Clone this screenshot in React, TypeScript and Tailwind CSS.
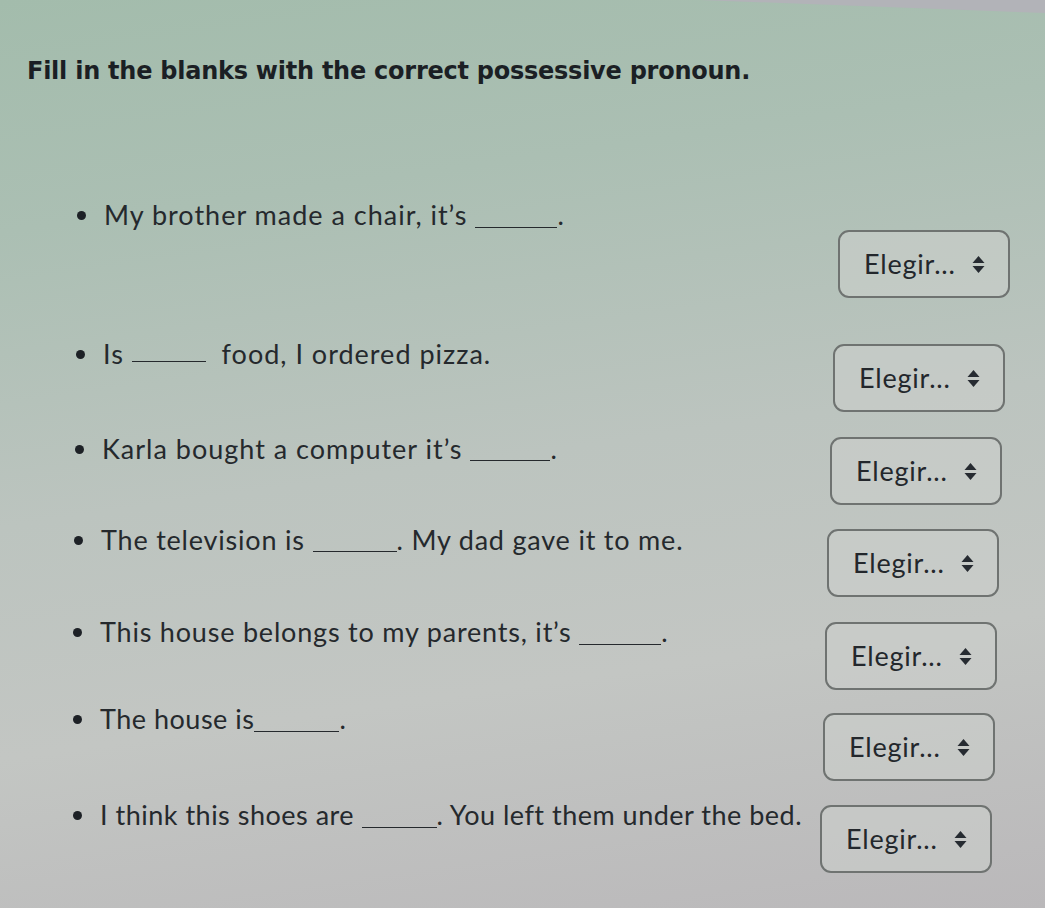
import React from "react";

type Part = string | { blank: string };

type Row = {
  parts: Part[];
  rowClass: string;
  textClass: string;
  selectClass: string;
};

const rows: Row[] = [
  {
    parts: ["My brother made a chair, it’s ", { blank: "w-[82px] translate-y-[9px]" }, "."],
    rowClass: "mt-[110px]",
    textClass: "pl-[77px] tracking-[1px]",
    selectClass: "mt-[33px] mr-[35px]",
  },
  {
    parts: ["Is ", { blank: "w-[74px] translate-y-[4px]" }, "  food, I ordered pizza."],
    rowClass: "mt-[38px]",
    textClass: "pl-[76px] tracking-[1px]",
    selectClass: "mt-[8px] mr-[40px]",
  },
  {
    parts: ["Karla bought a computer it’s ", { blank: "w-[80px] translate-y-[8px]" }, "."],
    rowClass: "mt-[19px]",
    textClass: "pl-[75px] tracking-[1px]",
    selectClass: "mt-[6px] mr-[43px]",
  },
  {
    parts: ["The television is ", { blank: "w-[84px] translate-y-[8px]" }, ". My dad gave it to me."],
    rowClass: "mt-[17px]",
    textClass: "pl-[74px] tracking-[0.8px]",
    selectClass: "mt-[7px] mr-[46px]",
  },
  {
    parts: ["This house belongs to my parents, it’s ", { blank: "w-[82px] translate-y-[9px]" }, "."],
    rowClass: "mt-[17px]",
    textClass: "pl-[73px] tracking-[0.8px]",
    selectClass: "mt-[8px] mr-[48px]",
  },
  {
    parts: ["The house is", { blank: "w-[85px] translate-y-[9px]" }, "."],
    rowClass: "mt-[11px]",
    textClass: "pl-[73px] tracking-[0.5px]",
    selectClass: "mt-[12px] mr-[50px]",
  },
  {
    parts: ["I think this shoes are ", { blank: "w-[75px] translate-y-[9px]" }, ". You left them under the bed."],
    rowClass: "mt-[16px]",
    textClass: "pl-[73px] tracking-[0.5px]",
    selectClass: "mt-[8px] mr-[53px]",
  },
];

function UpDownArrows() {
  return (
    <svg width="13" height="19" viewBox="0 0 13 19" className="shrink-0">
      <path d="M6.5 1 L12.5 8 L0.5 8 Z" fill="#262b31" />
      <path d="M0.5 11 L12.5 11 L6.5 18 Z" fill="#262b31" />
    </svg>
  );
}

function ChoiceBox({ className }: { className: string }) {
  return (
    <div
      className={`flex h-[68px] w-[172px] shrink-0 items-center rounded-[11px] border-2 border-[#6f7371] bg-[#cbcfcb]/60 pl-[24px] text-[27px] tracking-[0.8px] text-[#23272c] ${className}`}
    >
      <span>Elegir...</span>
      <span className="ml-[16px]">
        <UpDownArrows />
      </span>
    </div>
  );
}

export default function App() {
  return (
    <div
      className="relative h-[908px] w-[1045px] overflow-hidden bg-[linear-gradient(172deg,#a3bcac_0%,#abbfb3_22%,#bcc4bf_50%,#c3c6c3_72%,#bab8ba_100%)] text-[#25292d]"
      style={{ fontFamily: "Lato, 'Open Sans', sans-serif" }}
    >
      {/* lighter screen bezel along the top edge */}
      <svg className="absolute left-0 top-0" width="1045" height="16" viewBox="0 0 1045 16">
        <polygon points="700,0 1045,0 1045,13" fill="#b2b3b8" />
      </svg>

      <div className="pl-[27px] pt-[55px]">
        <h1
          className="text-[24px] font-bold leading-[32px] tracking-[-0.25px] text-[#1b1f24]"
          style={{ fontFamily: "'DejaVu Sans', Verdana, sans-serif" }}
        >
          Fill in the blanks with the correct possessive pronoun.
        </h1>
      </div>

      <ul className="flex flex-col">
        {rows.map((row, i) => (
          <li key={i} className={`flex items-start ${row.rowClass}`}>
            <div className={`flex h-[36px] min-w-0 items-center ${row.textClass}`}>
              <span className="mr-[18px] h-[9px] w-[9px] shrink-0 rounded-full bg-[#1d2126]" />
              <span className="whitespace-pre text-[27px] leading-[36px]">
                {row.parts.map((p, j) =>
                  typeof p === "string" ? (
                    <span key={j}>{p}</span>
                  ) : (
                    <span
                      key={j}
                      className={`inline-block border-b-[1.5px] border-[#25292d] align-middle ${p.blank}`}
                    />
                  )
                )}
              </span>
            </div>
            <ChoiceBox className={`ml-auto ${row.selectClass}`} />
          </li>
        ))}
      </ul>
    </div>
  );
}
